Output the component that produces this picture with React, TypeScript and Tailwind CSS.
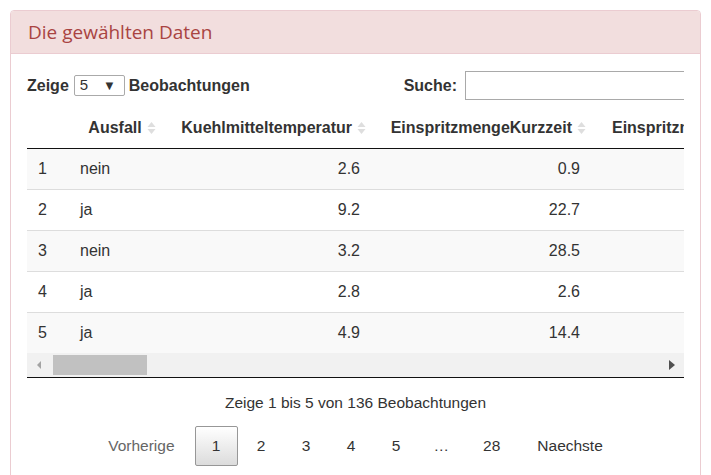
import React from "react";

const SortIcon = () => (
  <svg width="9" height="14" viewBox="0 0 9 14" className="absolute right-[4px] top-1/2 -translate-y-1/2">
    <path d="M4.5 1 L8.5 6 L0.5 6 Z" fill="#dedede" />
    <path d="M4.5 13 L8.5 8 L0.5 8 Z" fill="#dedede" />
  </svg>
);

const rows = [
  ["1", "nein", "2.6", "0.9"],
  ["2", "ja", "9.2", "22.7"],
  ["3", "nein", "3.2", "28.5"],
  ["4", "ja", "2.8", "2.6"],
  ["5", "ja", "4.9", "14.4"],
];

export default function App() {
  return (
    <div className="p-[10px] bg-white text-[#333]" style={{ fontFamily: '"Liberation Sans", Arial, sans-serif' }}>
      <div className="border border-[#ebccd1] rounded-t-[4px] h-[470px] overflow-hidden">
        <div
          className="bg-[#f2dede] border-b border-[#ebccd1] px-[17px] h-[43px] flex items-center text-[#a94442] text-[19px]"
          style={{ fontFamily: '"Open Sans", sans-serif' }}
        >
          Die gewählten Daten
        </div>
        <div className="px-[16px] pt-[16px] text-[16px]">
          <div className="flex items-center justify-between h-[31px]">
            <div className="flex items-center font-bold">
              <span>Zeige</span>
              <div className="ml-[5px] mr-[4px] w-[51px] h-[21px] border border-[#aaa] rounded-[2px] flex items-center justify-between pl-[5px] pr-[8px] font-normal text-[15px]">
                <span>5</span>
                <span className="text-[13px] leading-none">▼</span>
              </div>
              <span>Beobachtungen</span>
            </div>
            <div className="flex items-center font-bold gap-[8px]">
              <span>Suche:</span>
              <div className="w-[219px] h-[29px] border border-[#a9a9a9] border-r-0"></div>
            </div>
          </div>
          <div className="overflow-hidden mt-[7px]">
            <table className="table-fixed border-collapse w-[900px]">
              <colgroup>
                <col className="w-[43px]" />
                <col className="w-[90px]" />
                <col className="w-[210px]" />
                <col className="w-[220px]" />
                <col className="w-[220px]" />
                <col />
              </colgroup>
              <thead>
                <tr className="border-b border-[#111]">
                  <th className="h-[40px]"></th>
                  <th className="relative pl-[16px] pr-[16px] text-center font-bold">
                    Ausfall
                    <SortIcon />
                  </th>
                  <th className="relative pl-[10px] pr-[18px] text-right font-bold whitespace-nowrap">
                    Kuehlmitteltemperatur
                    <SortIcon />
                  </th>
                  <th className="relative pl-[10px] pr-[18px] text-right font-bold whitespace-nowrap">
                    EinspritzmengeKurzzeit
                    <SortIcon />
                  </th>
                  <th className="relative pl-[10px] pr-[14px] text-right font-bold whitespace-nowrap">
                    EinspritzmengeLangzeit
                    <SortIcon />
                  </th>
                  <th></th>
                </tr>
              </thead>
              <tbody>
                {rows.map((r, i) => (
                  <tr key={r[0]} className={(i % 2 === 0 ? "bg-[#f9f9f9] " : "bg-white ") + (i > 0 ? "border-t border-[#ddd]" : "")}>
                    <td className="px-[11px] h-[41px] leading-[20px]">{r[0]}</td>
                    <td className="px-[10px] leading-[20px]">{r[1]}</td>
                    <td className="px-[10px] text-right leading-[20px]">{r[2]}</td>
                    <td className="px-[10px] text-right leading-[20px]">{r[3]}</td>
                    <td className="px-[10px] text-right leading-[20px]"></td>
                    <td></td>
                  </tr>
                ))}
              </tbody>
            </table>
          </div>
          <div className="h-[25px] bg-[#f1f1f1] flex items-center border-b border-[#111]">
            <div className="w-[24px] flex justify-center">
              <svg width="4" height="8" viewBox="0 0 4 8">
                <path d="M4 0 L0 4 L4 8 Z" fill="#a3a3a3" />
              </svg>
            </div>
            <div className="ml-[2px] w-[94px] h-[20px] bg-[#c1c1c1]"></div>
            <div className="flex-1"></div>
            <div className="w-[24px] flex justify-center">
              <svg width="6" height="10" viewBox="0 0 6 10">
                <path d="M0 0 L6 5 L0 10 Z" fill="#505050" />
              </svg>
            </div>
          </div>
          <div className="text-center pt-[15px] leading-[20px] text-[15.5px]">Zeige 1 bis 5 von 136 Beobachtungen</div>
          <div className="flex justify-center items-center mt-[13px] gap-[2px] leading-[20px] text-[15.5px]">
            <span className="px-[14px] py-[9px] border border-transparent text-[#666]">Vorherige</span>
            <span className="ml-[3px] min-w-[43px] text-center px-[14px] py-[9px] border border-[#979797] rounded-[2px] bg-gradient-to-b from-white to-[#dcdcdc]">1</span>
            <span className="min-w-[43px] text-center px-[14px] py-[9px] border border-transparent">2</span>
            <span className="min-w-[43px] text-center px-[14px] py-[9px] border border-transparent">3</span>
            <span className="min-w-[43px] text-center px-[14px] py-[9px] border border-transparent">4</span>
            <span className="min-w-[43px] text-center px-[14px] py-[9px] border border-transparent">5</span>
            <span className="px-[14px] py-[9px]">…</span>
            <span className="ml-[3px] min-w-[43px] text-center px-[14px] py-[9px] border border-transparent">28</span>
            <span className="ml-[5px] px-[14px] py-[9px] border border-transparent">Naechste</span>
          </div>
        </div>
      </div>
    </div>
  );
}
